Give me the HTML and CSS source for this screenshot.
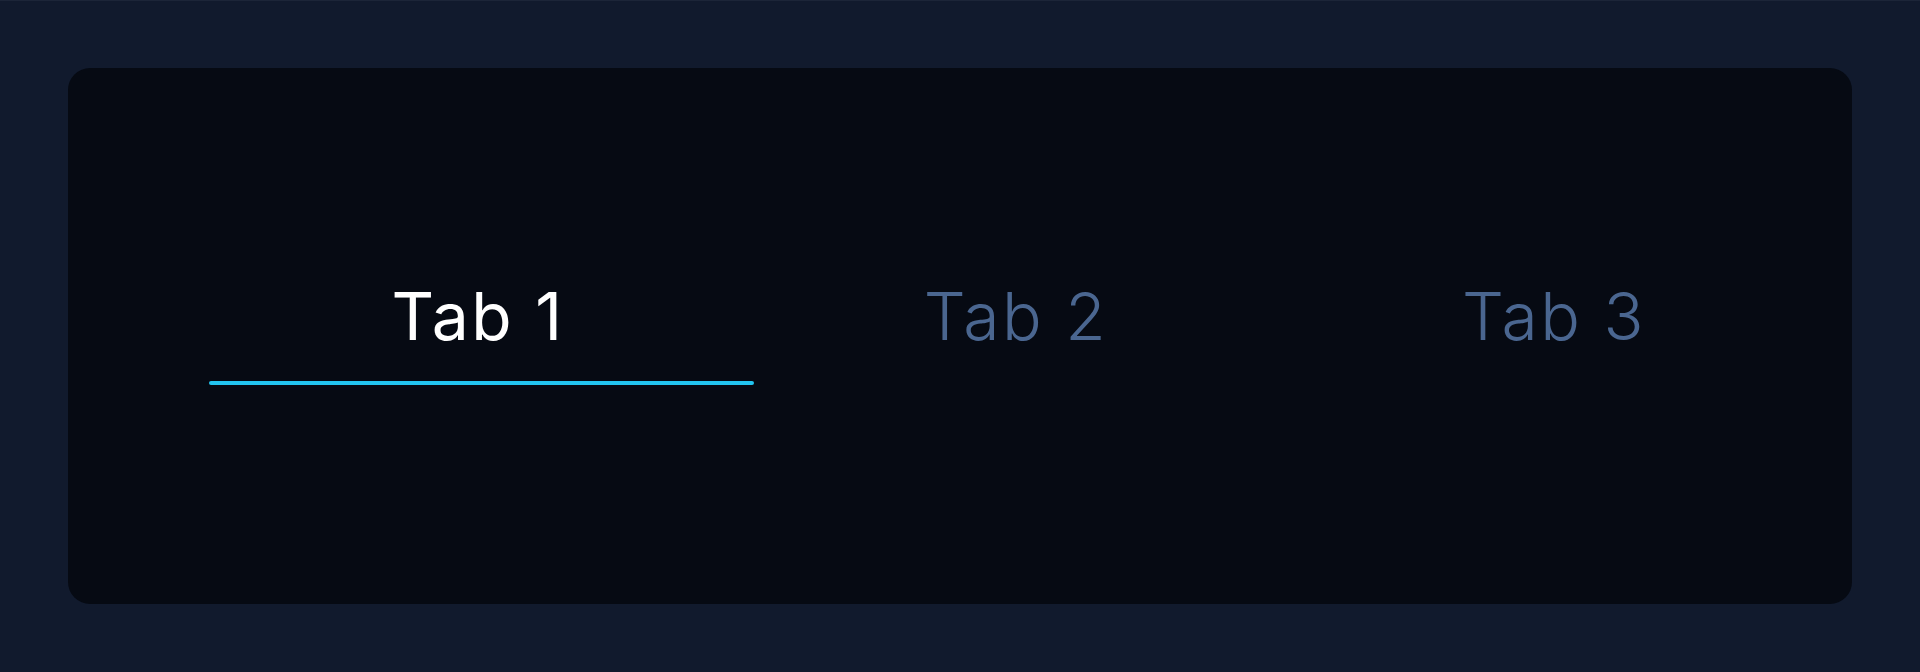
FILE: index.html
```html
<!DOCTYPE html>
<html lang="en">
<head>
<meta charset="utf-8">
<title>Tabs</title>
<link rel="stylesheet" href="styles.css">
</head>
<body>
<div class="page">
  <div class="card">
    <div class="tabs">
      <div class="tab active"><span class="label">Tab 1</span><span class="indicator"></span></div>
      <div class="tab"><span class="label">Tab 2</span><span class="indicator"></span></div>
      <div class="tab"><span class="label">Tab 3</span><span class="indicator"></span></div>
    </div>
  </div>
</div>
</body>
</html>
```
FILE: styles.css
```css
html, body {
  margin: 0;
  padding: 0;
  background: #111a2d;
}
.page {
  width: 1920px;
  height: 672px;
  box-sizing: border-box;
  padding: 67px 68px 69px 68px;
  border-top: 1px solid #1c2538;
}
.card {
  height: 536px;
  background: #060a13;
  border-radius: 22px;
  padding: 0 0 0 141px;
  box-sizing: border-box;
}
.tabs {
  display: flex;
  padding-top: 215px;
}
.tab {
  width: 538px;
  display: flex;
  flex-direction: column;
  align-items: center;
}
.label {
  font-family: Inter, "Noto Sans", sans-serif;
  font-size: 66px;
  line-height: 66px;
  font-weight: 300;
  color: #4a6690;
  letter-spacing: 2.5px;
}
.tab.active .label {
  color: #ffffff;
  font-weight: 400;
}
.indicator {
  align-self: stretch;
  height: 4px;
  border-radius: 2px;
  margin: 32px -7px 0 0;
  background: transparent;
}
.tab.active .indicator {
  background: #22c4f0;
}
```
